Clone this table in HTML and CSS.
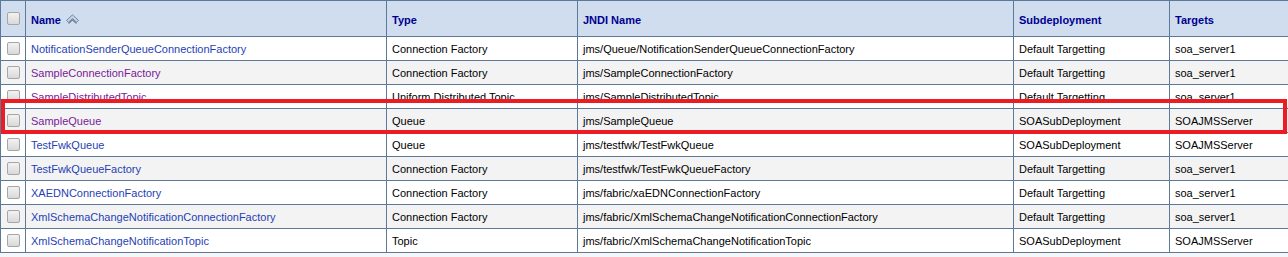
FILE: index.html
```html
<!DOCTYPE html>
<html>
<head>
<meta charset="utf-8">
<link rel="stylesheet" href="styles.css">
</head>
<body>
<div class="wrap">
<table class="grid">
<colgroup>
<col class="c-cb"><col class="c-name"><col class="c-type"><col class="c-jndi"><col class="c-sub"><col class="c-tgt">
</colgroup>
<thead>
<tr>
<th class="cb"><span class="box"></span></th>
<th>Name <svg class="sort" width="15" height="11" viewBox="0 0 15 11"><path d="M1.5 6.5 L7.5 0.8 L13.5 6.5 L11.5 8.3 L7.5 4.5 L3.5 8.3 Z" fill="#c9d5e6" stroke="#6f829f" stroke-width="1"/><path d="M3.5 9.5 L7.5 5.8 L11.5 9.5" fill="none" stroke="#6f829f" stroke-width="1.2"/></svg></th>
<th>Type</th>
<th>JNDI Name</th>
<th>Subdeployment</th>
<th>Targets</th>
</tr>
</thead>
<tbody>
<tr><td class="cb"><span class="box"></span></td><td><a class="lnk">NotificationSenderQueueConnectionFactory</a></td><td>Connection Factory</td><td>jms/Queue/NotificationSenderQueueConnectionFactory</td><td>Default Targetting</td><td>soa_server1</td></tr>
<tr><td class="cb"><span class="box"></span></td><td><a class="lnk visited">SampleConnectionFactory</a></td><td>Connection Factory</td><td>jms/SampleConnectionFactory</td><td>Default Targetting</td><td>soa_server1</td></tr>
<tr><td class="cb"><span class="box"></span></td><td><a class="lnk visited">SampleDistributedTopic</a></td><td>Uniform Distributed Topic</td><td>jms/SampleDistributedTopic</td><td>Default Targetting</td><td>soa_server1</td></tr>
<tr><td class="cb"><span class="box"></span></td><td><a class="lnk visited">SampleQueue</a></td><td>Queue</td><td>jms/SampleQueue</td><td>SOASubDeployment</td><td>SOAJMSServer</td></tr>
<tr><td class="cb"><span class="box"></span></td><td><a class="lnk">TestFwkQueue</a></td><td>Queue</td><td>jms/testfwk/TestFwkQueue</td><td>SOASubDeployment</td><td>SOAJMSServer</td></tr>
<tr><td class="cb"><span class="box"></span></td><td><a class="lnk">TestFwkQueueFactory</a></td><td>Connection Factory</td><td>jms/testfwk/TestFwkQueueFactory</td><td>Default Targetting</td><td>soa_server1</td></tr>
<tr><td class="cb"><span class="box"></span></td><td><a class="lnk">XAEDNConnectionFactory</a></td><td>Connection Factory</td><td>jms/fabric/xaEDNConnectionFactory</td><td>Default Targetting</td><td>soa_server1</td></tr>
<tr><td class="cb"><span class="box"></span></td><td><a class="lnk">XmlSchemaChangeNotificationConnectionFactory</a></td><td>Connection Factory</td><td>jms/fabric/XmlSchemaChangeNotificationConnectionFactory</td><td>Default Targetting</td><td>soa_server1</td></tr>
<tr><td class="cb"><span class="box"></span></td><td><a class="lnk">XmlSchemaChangeNotificationTopic</a></td><td>Topic</td><td>jms/fabric/XmlSchemaChangeNotificationTopic</td><td>SOASubDeployment</td><td>SOAJMSServer</td></tr>
</tbody>
</table>
<div class="highlight"></div>
</div>
</body>
</html>
```
FILE: styles.css
```css
html, body {
  margin: 0;
  padding: 0;
  background: #f6f6f6;
}
.wrap {
  position: relative;
  width: 1288px;
}
.grid {
  width: 1288px;
  border-collapse: collapse;
  table-layout: fixed;
  font-family: "Liberation Sans", Arial, sans-serif;
  font-size: 11px;
  color: #000;
}
.c-cb { width: 25px; }
.c-name { width: 361px; }
.c-type { width: 191px; }
.c-jndi { width: 436px; }
.c-sub { width: 156px; }
.c-tgt { width: 119px; }
.grid th, .grid td {
  border: 1px solid #5d7898;
  padding: 0 5px;
  text-align: left;
  white-space: nowrap;
  overflow: hidden;
}
.grid th {
  height: 33px;
  background: #cfddef;
  color: #00008f;
  font-weight: bold;
  font-size: 11px;
  padding-top: 2px;
}
.grid td {
  height: 23px;
  background: #fff;
}
.grid tbody tr:nth-child(even) td {
  background: #f3f3f3;
}
.grid td.cb, .grid th.cb {
  padding: 0;
  text-align: center;
}
.box {
  display: inline-block;
  width: 11px;
  height: 11px;
  border: 1px solid #a6a6a6;
  border-radius: 2px;
  background: linear-gradient(#f2f2f2, #d9d9d9);
  vertical-align: middle;
  box-sizing: content-box;
}
.sort {
  vertical-align: -1px;
  margin-left: 1px;
}
.lnk {
  color: #1f3fb5;
  text-decoration: none;
}
.lnk.visited {
  color: #7a1a98;
}
.highlight {
  position: absolute;
  left: 1px;
  top: 99px;
  width: 1278px;
  height: 27px;
  border: 4px solid #ec1c24;
}
```
